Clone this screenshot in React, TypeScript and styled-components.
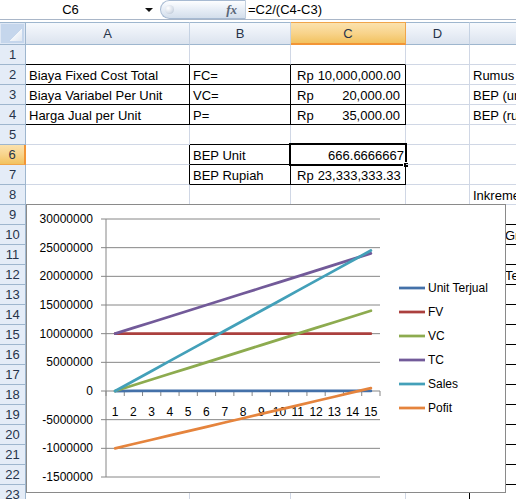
import React from 'react';
import styled, { createGlobalStyle, css } from 'styled-components';

const GlobalStyle = createGlobalStyle`
  html, body {
    margin: 0;
    padding: 0;
    background: #ffffff;
  }
  body {
    font-family: "Liberation Sans", Arial, sans-serif;
  }
`;

const Window = styled.div`
  position: relative;
  width: 516px;
  height: 499px;
  overflow: hidden;
  background: #ffffff;
`;

// formula bar
const FormulaBar = styled.div`
  display: flex;
  align-items: stretch;
  height: 19px;
  border-bottom: 1px solid #a9b6c8;
  font-size: 13px;
  color: #000;
`;

const NameBox = styled.div`
  display: flex;
  align-items: center;
  width: 160px;
`;

const NameText = styled.div`
  width: 141px;
  text-align: center;
`;

const DropArrow = styled.div`
  width: 0;
  height: 0;
  margin-left: 4px;
  border-left: 4px solid transparent;
  border-right: 4px solid transparent;
  border-top: 4px solid #111;
`;

const FxPill = styled.div`
  position: relative;
  display: flex;
  align-items: center;
  justify-content: flex-end;
  box-sizing: border-box;
  width: 86px;
  height: 19px;
  padding-right: 8px;
  border: 1px solid #a7bad2;
  border-right-color: #c3cfdd;
  border-radius: 10px 0 0 10px;
  background: linear-gradient(to bottom, #fdfeff 0%, #e9eff7 45%, #d3deeb 100%);
`;

const Knob = styled.div`
  position: absolute;
  left: 4px;
  top: 4px;
  width: 9px;
  height: 9px;
  border-radius: 50%;
  background: radial-gradient(circle at 35% 35%, #ffffff 0%, #d9e0ea 55%, #aab7c8 100%);
`;

const FxLabel = styled.span`
  font-family: "Liberation Serif", "Times New Roman", serif;
  font-style: italic;
  font-weight: bold;
  font-size: 13px;
  color: #5a6677;
`;

const FormulaText = styled.div`
  display: flex;
  align-items: center;
  padding-left: 2px;
`;

const Gap = styled.div`
  height: 2px;
  background: #ffffff;
`;

// sheet grid
const Sheet = styled.div`
  display: grid;
  grid-template-columns: 26px 164px 101px 115px 64px 220px;
  grid-template-rows: 23px;
  grid-auto-rows: 20px;
  font-size: 13px;
`;

const headerSelected = css`
  background: linear-gradient(to bottom, #fbe2ae 0%, #f8d48c 50%, #f2c25f 100%);
  border-color: #f0a54a;
`;

const Corner = styled.div`
  position: relative;
  box-sizing: border-box;
  border-top: 1px solid #9eb6ce;
  border-right: 1px solid #9eb6ce;
  border-bottom: 1px solid #9eb6ce;
  background: #c5d6ec;
  box-shadow: inset 0 0 0 1px #dfe8f5;

  &::after {
    content: '';
    position: absolute;
    right: 3px;
    bottom: 3px;
    width: 13px;
    height: 13px;
    background: linear-gradient(to bottom right, transparent 50%, #f4f7fb 50%, #dfe6f0 100%);
  }
`;

const ColHeader = styled.div<{ $selected?: boolean }>`
  display: flex;
  align-items: center;
  justify-content: center;
  box-sizing: border-box;
  border-top: 1px solid #9eb6ce;
  border-right: 1px solid #c5d2e3;
  border-bottom: 1px solid #9eb6ce;
  background: linear-gradient(to bottom, #f6f9fd 0%, #e9eef6 50%, #dbe3ee 100%);
  color: #27344a;
  ${(p) => p.$selected && headerSelected}
  ${(p) => p.$selected && css`border-bottom: 2px solid #f29536;`}
`;

const RowHeader = styled.div<{ $selected?: boolean }>`
  display: flex;
  align-items: center;
  justify-content: center;
  box-sizing: border-box;
  border-right: 1px solid #9eb6ce;
  border-bottom: 1px solid #9eb6ce;
  background: #e4ecf7;
  color: #27344a;
  ${(p) => p.$selected && headerSelected}
  ${(p) => p.$selected && css`border-right: 2px solid #f29536;`}
`;

const Cell = styled.div<{ $br?: boolean; $bb?: boolean; $align?: string; $indent?: number }>`
  position: relative;
  display: flex;
  align-items: center;
  gap: 4px;
  box-sizing: border-box;
  padding: 1px ${(p) => (p.$align === 'acct' ? 5 : p.$align === 'right' ? 1 : 0)}px 0
    ${(p) => (p.$align === 'acct' ? 6 : 3 + (p.$indent || 0))}px;
  border-right: 1px solid ${(p) => (p.$br ? '#000' : '#d0d7e5')};
  border-bottom: 1px solid ${(p) => (p.$bb ? '#000' : '#d0d7e5')};
  justify-content: ${(p) =>
    p.$align === 'right' ? 'flex-end' : p.$align === 'acct' ? 'space-between' : 'flex-start'};
  white-space: nowrap;
  color: #000;
`;

const Selection = styled.div`
  position: absolute;
  left: -2px;
  top: -2px;
  width: 118px;
  height: 23px;
  box-sizing: border-box;
  border: 2px solid #000;
  pointer-events: none;

  &::after {
    content: '';
    position: absolute;
    right: -4px;
    bottom: -4px;
    width: 4px;
    height: 4px;
    background: #000;
    border: 1px solid #fff;
  }
`;

// chart
const ChartBox = styled.div`
  position: absolute;
  left: 26px;
  top: 204px;
  width: 480px;
  height: 289px;
  box-sizing: border-box;
  border: 1px solid #8a8a8a;
  background: #ffffff;
`;

const ChartSvg = styled.svg`
  display: block;
  font-family: "Liberation Sans", Arial, sans-serif;
  font-size: 12px;
`;

interface CellSpec {
  text?: string;
  align?: 'left' | 'right' | 'acct';
  br?: boolean;
  bb?: boolean;
  indent?: number;
  selected?: boolean;
}

const columns = ['A', 'B', 'C', 'D', 'E'];
const ROWS = 23;

const buildRows = (): CellSpec[][] => {
  const rows: CellSpec[][] = [];
  for (let r = 1; r <= ROWS; r++) rows.push(columns.map(() => ({})));
  const set = (r: number, c: number, spec: CellSpec) => {
    rows[r - 1][c] = { ...rows[r - 1][c], ...spec };
  };

  // top edge of input block
  set(1, 0, { bb: true });
  set(1, 1, { bb: true });
  set(1, 2, { bb: true });

  const inputs = [
    ['Biaya Fixed Cost Total', 'FC=', '10,000,000.00', 'Rumus BEP'],
    ['Biaya Variabel Per Unit', 'VC=', '20,000.00', 'BEP (unit) = FC / (P - VC)'],
    ['Harga Jual per Unit', 'P=', '35,000.00', 'BEP (rupiah) = FC / (1 - VC/P)'],
  ];
  inputs.forEach(([a, b, c, e], i) => {
    const r = i + 2;
    set(r, 0, { text: a, br: true, bb: true });
    set(r, 1, { text: b, br: true, bb: true });
    set(r, 2, { text: c, align: 'acct', br: true, bb: true });
    set(r, 4, { text: e });
  });

  set(5, 1, { bb: true });
  set(5, 2, { bb: true });
  set(6, 0, { br: true });
  set(7, 0, { br: true });
  set(6, 1, { text: 'BEP Unit', br: true, bb: true });
  set(6, 2, { text: '666.6666667', align: 'right', br: true, bb: true, selected: true });
  set(7, 1, { text: 'BEP Rupiah', br: true, bb: true });
  set(7, 2, { text: '23,333,333.33', align: 'acct', br: true, bb: true });
  set(8, 4, { text: 'Inkremental' });

  for (let r = 9; r <= 23; r++) {
    set(r, 3, { br: true });
    if (r <= 22) set(r, 4, { bb: true });
  }
  set(10, 4, { text: 'Grafik BEP', indent: 32 });
  set(12, 4, { text: 'Terjual', indent: 32 });
  return rows;
};

const sheetRows = buildRows();

// chart geometry, in page pixels
const PLOT_LEFT = 106;
const PLOT_RIGHT = 380;
const ZERO_Y = 391;
const PX_PER_UNIT = 172 / 30000000;
const CATS = 15;
const catW = (PLOT_RIGHT - PLOT_LEFT) / CATS;
const cx = (i: number) => PLOT_LEFT + catW * (i + 0.5);
const yv = (v: number) => ZERO_Y - v * PX_PER_UNIT;

const yTicks = [30000000, 25000000, 20000000, 15000000, 10000000, 5000000, 0, -5000000, -10000000, -15000000];
const yLabels = ['30000000', '25000000', '20000000', '15000000', '10000000', '5000000', '0', '-5000000', '-1000000', '-1500000'];

const units = Array.from({ length: CATS }, (_, i) => 50 * i);

const series = [
  { name: 'Unit Terjual', color: '#4471a9', data: units },
  { name: 'FV', color: '#ab403e', data: units.map(() => 10000000) },
  { name: 'VC', color: '#8dab4f', data: units.map((u) => 20000 * u) },
  { name: 'TC', color: '#725a99', data: units.map((u) => 10000000 + 20000 * u) },
  { name: 'Sales', color: '#43a0b9', data: units.map((u) => 35000 * u) },
  { name: 'Pofit', color: '#e5843d', data: units.map((u) => 15000 * u - 10000000) },
];

const BepChart: React.FC = () => (
  <ChartBox>
    <ChartSvg width={478} height={287} viewBox="27 205 478 287">
      {yTicks.map((v) => (
        <line key={v} x1={PLOT_LEFT - 5} x2={PLOT_RIGHT} y1={yv(v)} y2={yv(v)} stroke="#868686" strokeWidth={1} />
      ))}
      <line x1={PLOT_LEFT} x2={PLOT_LEFT} y1={yv(30000000)} y2={yv(-15000000)} stroke="#868686" strokeWidth={1} />
      {Array.from({ length: CATS + 1 }, (_, k) => (
        <line
          key={k}
          x1={PLOT_LEFT + catW * k}
          x2={PLOT_LEFT + catW * k}
          y1={ZERO_Y}
          y2={ZERO_Y + 5}
          stroke="#868686"
          strokeWidth={1}
        />
      ))}
      {yTicks.map((v, i) => (
        <text key={v} x={93} y={yv(v)} textAnchor="end" dominantBaseline="central" fill="#000">
          {yLabels[i]}
        </text>
      ))}
      {units.map((_, i) => (
        <text key={i} x={cx(i)} y={412} textAnchor="middle" dominantBaseline="central" fill="#000">
          {i + 1}
        </text>
      ))}
      {series.map((s) => (
        <polyline
          key={s.name}
          points={s.data.map((v, i) => `${cx(i)},${yv(v)}`).join(' ')}
          fill="none"
          stroke={s.color}
          strokeWidth={2.75}
          strokeLinecap="round"
          strokeLinejoin="round"
        />
      ))}
      {series.map((s, i) => (
        <g key={s.name}>
          <line x1={399} x2={425} y1={288 + i * 24} y2={288 + i * 24} stroke={s.color} strokeWidth={2.75} />
          <text x={428} y={288 + i * 24} dominantBaseline="central" fill="#000">
            {s.name}
          </text>
        </g>
      ))}
    </ChartSvg>
  </ChartBox>
);

const App: React.FC = () => {
  return (
    <Window>
      <GlobalStyle />
      <FormulaBar>
        <NameBox>
          <NameText>C6</NameText>
          <DropArrow />
        </NameBox>
        <FxPill>
          <Knob />
          <FxLabel>fx</FxLabel>
        </FxPill>
        <FormulaText>=C2/(C4-C3)</FormulaText>
      </FormulaBar>
      <Gap />
      <Sheet>
        <Corner />
        {columns.map((c) => (
          <ColHeader key={c} $selected={c === 'C'}>
            {c === 'E' ? '' : c}
          </ColHeader>
        ))}
        {sheetRows.map((row, r) => (
          <React.Fragment key={r}>
            <RowHeader $selected={r + 1 === 6}>{r + 1}</RowHeader>
            {row.map((cell, c) => (
              <Cell key={c} $br={cell.br} $bb={cell.bb} $align={cell.align} $indent={cell.indent}>
                {cell.align === 'acct' ? (
                  <>
                    <span>Rp</span>
                    <span>{cell.text}</span>
                  </>
                ) : (
                  cell.text
                )}
                {cell.selected && <Selection />}
              </Cell>
            ))}
          </React.Fragment>
        ))}
      </Sheet>
      <BepChart />
    </Window>
  );
};

export default App;
